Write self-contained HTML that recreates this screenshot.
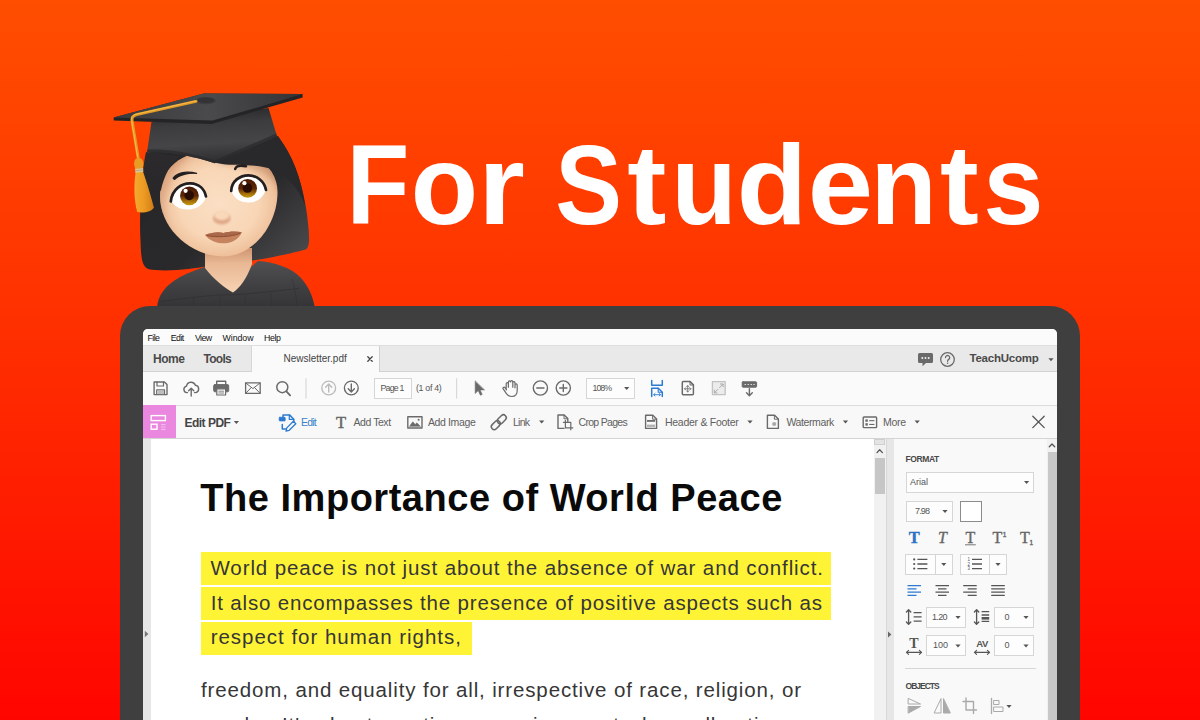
<!DOCTYPE html>
<html><head><meta charset="utf-8">
<style>
*{box-sizing:border-box;margin:0;padding:0}
html,body{width:1200px;height:720px;overflow:hidden}
body{position:relative;font-family:"Liberation Sans",sans-serif;background:linear-gradient(180deg,#ff4e00 0%,#ff2e00 48%,#ff0500 100%);}
.abs{position:absolute}
#title{left:346px;top:120px;font-size:113px;font-weight:bold;color:#fff;white-space:nowrap;line-height:130px;letter-spacing:0px}
#frame{left:120px;top:306px;width:960px;height:430px;background:#3f3f3f;border-radius:30px 30px 0 0}
#screen{left:143px;top:329px;width:914px;height:400px;background:#fff;border-radius:5px 5px 0 0;overflow:hidden}
#menubar{left:0;top:0;width:914px;height:16px;background:#fbfbfb;font-size:9px;color:#222}
#menubar span{position:absolute;top:3px}
#tabbar{left:0;top:16px;width:914px;height:26px;background:#e9e9e9;border-top:1px solid #dcdcdc;border-bottom:1px solid #d0d0d0}
#tab{left:108px;top:0;width:128px;height:25px;background:#fafafa;border-right:1px solid #cfcfcf}
#toolbar{left:0;top:42px;width:914px;height:34px;background:#fafafa;border-bottom:1px solid #dadada}
#editbar{left:0;top:76px;width:914px;height:33px;background:#f7f7f7;border-bottom:1px solid #d6d6d6}
#pink{left:0;top:0;width:32px;height:33px;background:#e58be0}
#doc{left:0;top:109px;width:914px;height:300px;background:#e6e6e6}
#page{left:8px;top:1px;width:722px;height:300px;background:#fff}
#panel{left:750px;top:0;width:154px;height:300px;background:#f5f5f5}
.t{position:absolute;white-space:nowrap}
#title span{display:inline-block}

.m{top:333.4px;font-size:8.8px;color:#101010}
.hb{top:351.8px;font-size:12px;font-weight:bold;color:#4a4a4a}
.tb{top:383.3px;font-size:8.8px;color:#555}
.eb{top:415.8px;font-size:10.5px;color:#606060}
.bx{background:#fdfdfd;border:1px solid #d6d6d6}
.hl{background:#fff336}
.p{font-size:20.5px;color:#363636;line-height:24px}
.pn{font-size:8.5px;font-weight:bold;color:#484848}
.ps{font-size:9px;color:#555}
</style></head><body>
<div id="title" class="abs"><span style="transform:translateX(-2.5px) scaleX(0.91)">F</span><span style="transform:translateX(-5px) scaleX(0.975)">o</span><span style="transform:translateX(-4.5px) scaleX(1.06)">r</span> <span style="transform:translateX(-8px) scaleX(0.886)">S</span><span style="transform:translateX(-7px) scaleX(1.04)">t</span><span style="transform:translateX(-2.5px) scaleX(0.944)">u</span><span style="transform:translateX(-4.5px) scaleX(1.02)">d</span><span style="transform:translateX(-2px) scaleX(1.04)">e</span><span style="transform:translateX(-4px) scaleX(0.96)">n</span><span style="transform:translateX(-1.5px) scaleX(1.03)">t</span><span style="transform:translateX(2px) scaleX(0.96)">s</span></div>
<!--EMOJI--><svg id="emoji" class="abs" style="left:100px;top:80px" width="240" height="240" viewBox="100 80 240 240">
<defs>
<linearGradient id="gHair" x1="0" y1="0" x2="1" y2="0.9"><stop offset="0" stop-color="#262527"/><stop offset="0.6" stop-color="#29282a"/><stop offset="0.82" stop-color="#3c3b3d"/><stop offset="1" stop-color="#4c4b4d"/></linearGradient>
<linearGradient id="gHairL" x1="0" y1="0" x2="0" y2="1"><stop offset="0" stop-color="#2c2a2c"/><stop offset="1" stop-color="#252426"/></linearGradient>
<radialGradient id="gFace" cx="0.5" cy="0.5" r="0.56"><stop offset="0" stop-color="#fbdfc4"/><stop offset="0.6" stop-color="#f8d6b6"/><stop offset="0.88" stop-color="#efc19b"/><stop offset="1" stop-color="#dba27a"/></radialGradient>
<linearGradient id="gNeck" x1="0" y1="0" x2="0" y2="1"><stop offset="0" stop-color="#cf9470"/><stop offset="0.35" stop-color="#e9b894"/><stop offset="1" stop-color="#f6d3b3"/></linearGradient>
<linearGradient id="gGown" x1="0" y1="0" x2="0" y2="1"><stop offset="0" stop-color="#505052"/><stop offset="0.5" stop-color="#414143"/><stop offset="1" stop-color="#343436"/></linearGradient>
<linearGradient id="gCap" x1="0" y1="0" x2="0.15" y2="1"><stop offset="0" stop-color="#232325"/><stop offset="0.35" stop-color="#3c3c3e"/><stop offset="0.7" stop-color="#454547"/><stop offset="1" stop-color="#303032"/></linearGradient>
<linearGradient id="gBoard" x1="0" y1="0.5" x2="1" y2="0.5"><stop offset="0" stop-color="#3a3a3c"/><stop offset="0.5" stop-color="#4a4a4c"/><stop offset="1" stop-color="#343436"/></linearGradient>
<linearGradient id="gTassel" x1="0" y1="0" x2="1" y2="0"><stop offset="0" stop-color="#f4aa30"/><stop offset="0.5" stop-color="#ec9a22"/><stop offset="1" stop-color="#d07e16"/></linearGradient>
<linearGradient id="gIris" x1="0" y1="0" x2="0" y2="1"><stop offset="0" stop-color="#4a1804"/><stop offset="0.5" stop-color="#5e2606"/><stop offset="0.8" stop-color="#a87408"/><stop offset="1" stop-color="#c89a10"/></linearGradient>
<filter id="b1" x="-20%" y="-20%" width="140%" height="140%"><feGaussianBlur stdDeviation="1.200"/></filter>
<filter id="b3" x="-30%" y="-30%" width="160%" height="160%"><feGaussianBlur stdDeviation="3"/></filter>
<clipPath id="cFace"><path d="M160 196 C160 170 180 150 218 150 C256 150 277.500 168 277.500 192 C277.500 226 252 256.500 224 256.500 C190 256.500 160 228 160 196 Z"/></clipPath>
</defs>
<!-- back hair -->
<path d="M150 150 C141 175 139 215 140.500 240 C141 258 142 266 148 269 C165 272.500 195 268.500 206 266.500 L256 260 C275 257 295 252.500 305.500 249.500 C309.500 248 309.500 240 308.500 228 C306 195 296 160 278 136 Z" fill="url(#gHair)"/>
<!-- gown -->
<path d="M157 308 C158 296 164 286 180 277 C190 272 198 269 205 267 L233 282 L258 261 C275 262 292 268 301 278 C309 287 313 297 315 308 Z" fill="url(#gGown)"/>
<path d="M161 301.500 C190 297.500 215 294.500 233 294.800 C255 293.500 280 290.500 299 288.500" stroke="#2c2c2e" stroke-width="0.800" fill="none" opacity="0.700"/>
<path d="M193.500 297.500 L194 308 M220 295.500 L220.300 308 M245 294.500 L245.500 308 M270.500 292.500 L271.500 308 M292 279 C295 288 296.500 298 297 308" stroke="#2e2e30" stroke-width="0.800" fill="none" opacity="0.600"/>
<!-- neck -->
<path d="M205 248 L205 268 C214 280 225 288 233 292.500 C240 288 247 278 252 264 L252 248 Z" fill="url(#gNeck)"/>
<!-- face -->
<path d="M160 196 C160 170 180 150 218 150 C256 150 277.500 168 277.500 192 C277.500 226 252 256.500 224 256.500 C190 256.500 160 228 160 196 Z" fill="url(#gFace)"/>
<g clip-path="url(#cFace)">
<path d="M150 150 L200 150 C180 160 168 180 164 205 C163 225 175 245 195 258 L150 260 Z" fill="#c98e6c" opacity="0.450" filter="url(#b3)"/>
<path d="M215 163 L280 137 L285 200 C278 180 262 168 240 166 Z" fill="#b98262" opacity="0.500" filter="url(#b3)"/>
</g>
<!-- front hair left -->
<path d="M146 152 C142 170 140 200 141.500 226 C148 208 156 198 161 190 C164 176 170 164 179 156 Z" fill="url(#gHairL)"/>
<!-- front hair right swoop -->
<path d="M214 162.500 L277 136 C293 155 301 178 305 205 C297 184 283 172 268 168 C250 163.500 235 166 222 164 Z" fill="#29282a"/>
<!-- eyebrows -->
<path d="M173.200 178.200 C176 173.500 185 170.200 196.600 173.400 C190 172.600 180 174.200 174.400 179.400 Z" fill="#231f20" stroke="#231f20" stroke-width="1.300" stroke-linejoin="round"/>
<path d="M235.200 169 C236 166 240 165 246 166.300" stroke="#231f20" stroke-width="2.600" fill="none" stroke-linecap="round"/>
<!-- eyes -->
<path d="M171.500 201 C173 190 182 184.500 190 184.500 C199 184.500 205 190 206 197 C204 204 197 209.500 188 209.500 C180 209.500 174 206 171.500 201 Z" fill="#fff"/>
<circle cx="189.400" cy="195.800" r="9.400" fill="url(#gIris)"/>
<circle cx="189.200" cy="195.400" r="4.800" fill="#2a0c02"/>
<circle cx="185.600" cy="190.800" r="2.100" fill="#fff"/>
<path d="M170.800 201.500 C172 189 182 183 190.500 183.300 C199 183.600 204.500 189 206 196.500" stroke="#231f20" stroke-width="2.700" fill="none" stroke-linecap="round"/>
<path d="M231.500 190.500 C232 181 240 176.500 248.500 176.500 C257 176.500 264 182 265.500 190 C264 197 257 202.500 248.500 202.500 C240 202.500 233 198 231.500 190.500 Z" fill="#fff"/>
<circle cx="247.600" cy="188.400" r="9.400" fill="url(#gIris)"/>
<circle cx="247.400" cy="188" r="4.800" fill="#2a0c02"/>
<circle cx="244.400" cy="183.200" r="2.100" fill="#fff"/>
<path d="M231.200 191 C231.500 181 240 175.300 248.500 175.300 C257 175.300 264.500 181.500 266 190" stroke="#231f20" stroke-width="2.700" fill="none" stroke-linecap="round"/>
<!-- nose -->
<ellipse cx="221.800" cy="218.400" rx="8.800" ry="6.200" fill="#e0a988" filter="url(#b1)"/>
<ellipse cx="221.800" cy="215.200" rx="7.600" ry="5" fill="#f9d8b9" filter="url(#b1)"/>
<!-- mouth -->
<path d="M205 235 C212 232.600 218 231.600 223.500 233 C229 231.300 236 231 242 232.200 C238.500 240 230.500 243.300 223.500 243.300 C215.500 243.300 209 240 205 235 Z" fill="#c5835f"/>
<path d="M205 235 C212 232.600 218 231.600 223.500 233 C229 231.300 236 231 242 232.200 C234 236.600 214 237.600 205 235 Z" fill="#a9684a"/>
<path d="M207 235.600 C215 237.600 232 237 240 233.400" stroke="#8a4630" stroke-width="0.900" fill="none" stroke-linecap="round"/>
<!-- cap skull -->
<path d="M151.500 122 L147 152.300 C160 152.300 168 152.500 177 154 C192 156.500 205 160 214.500 163.200 L277 136.300 L268.500 108 Z" fill="url(#gCap)"/>
<path d="M147.600 149.500 C160 149.300 168 149.700 177 151.200 C192 153.700 205 157.200 214.500 160.400 L276.200 133.600 L277 136.300 L214.500 163.200 C205 160 192 156.500 177 154 C168 152.500 160 152.300 147 152.300 Z" fill="#2a2a2c" opacity="0.700"/>
<!-- cap board -->
<path d="M113.600 117.600 L113.800 120.600 L211.500 124 L302.700 97.400 L302.500 94 L204 93.400 Z" fill="#242426"/>
<path d="M113.600 117.500 L203.400 93.400 L302.600 94.100 L212.500 120.600 Z" fill="url(#gBoard)"/>
<ellipse cx="205.800" cy="100.600" rx="10" ry="3.600" fill="#3e3e40"/>
<ellipse cx="205.800" cy="100.200" rx="8.600" ry="2.800" fill="#333335"/>
<!-- tassel cord -->
<path d="M196 101.400 L136.500 114.600 C132.800 115.600 131.600 117.600 132 120.600 L138.400 159" stroke="#e39a24" stroke-width="3" fill="none" stroke-linejoin="round" stroke-linecap="round"/>
<path d="M196 100.900 L136.300 114.100 C132.400 115.200 131.200 117.400 131.600 120.600 L137.600 157" stroke="#f6bf52" stroke-width="0.900" fill="none" stroke-linejoin="round" stroke-linecap="round"/>
<!-- tassel -->
<path d="M134.200 164.500 C133.800 160.500 135.500 158 138.500 158 C141.500 158 143.600 160.500 143.400 164.500 L142.800 168.500 L135.200 169.300 Z" fill="#e89c26"/>
<path d="M135.600 172 L142.800 171 C146 180 151 196 153.800 207.500 C152.400 211.500 143 213.500 137.200 212 C133.800 200 133.800 185 135.600 172 Z" fill="url(#gTassel)"/>
<path d="M135 169 L143 168 L143.400 171.800 L135.400 172.800 Z" fill="#d8c79a"/>
<path d="M135.200 170.800 L143.200 169.800" stroke="#a8925a" stroke-width="0.600"/>
</svg>
<!--/EMOJI-->
<div id="frame" class="abs"></div>
<div id="screen" class="abs"><div class="abs" id="W" style="left:-143px;top:-329px;width:1200px;height:720px">
<!-- bars -->
<div class="abs" style="left:143px;top:329px;width:914px;height:17px;background:#fbfbfb"></div>
<div class="abs" style="left:143px;top:345px;width:914px;height:27px;background:#e9e9e9;border-top:1px solid #dedede;border-bottom:1px solid #d2d2d2"></div>
<div class="abs" style="left:251px;top:346px;width:129px;height:26px;background:#fafafa;border-left:1px solid #d6d6d6;border-right:1px solid #cfcfcf"></div>
<div class="abs" style="left:143px;top:372px;width:914px;height:33px;background:#fafafa"></div>
<div class="abs" style="left:143px;top:405px;width:914px;height:34px;background:#f8f8f8;border-top:1px solid #dcdcdc;border-bottom:1px solid #d4d4d4"></div>
<div class="abs" style="left:143px;top:405px;width:32.500px;height:33px;background:#e988de"></div>
<!-- menu text -->
<div class="t m" style="left:147.500px;letter-spacing:-0.563px">File</div><div class="t m" style="left:170.75px;letter-spacing:-0.55px">Edit</div><div class="t m" style="left:195px;letter-spacing:-0.586px">View</div><div class="t m" style="left:222.500px;letter-spacing:-0.058px">Window</div><div class="t m" style="left:264px;letter-spacing:-0.416px">Help</div>
<div class="t hb" style="left:153px;letter-spacing:-0.452px">Home</div><div class="t hb" style="left:203.500px;letter-spacing:-0.718px">Tools</div>
<div class="t" style="left:283.500px;top:352.500px;font-size:10px;color:#444;letter-spacing:-0.010px">Newsletter.pdf</div>
<div class="t hb" style="left:969.500px;font-size:11.500px;top:352.3px;letter-spacing:-0.229px">TeachUcomp</div>
<!-- toolbar text & boxes -->
<div class="abs bx" style="left:374px;top:378px;width:38px;height:20.500px"></div>
<div class="t tb" style="left:380.500px;letter-spacing:-0.777px">Page 1</div><div class="t tb" style="left:416px;letter-spacing:-0.310px">(1 of 4)</div>
<div class="abs bx" style="left:585.500px;top:378px;width:49px;height:20.500px"></div>
<div class="t tb" style="left:592.500px;letter-spacing:-0.968px">108%</div>
<!-- editbar text -->
<div class="t" style="left:184.500px;top:415.500px;font-size:12px;font-weight:bold;color:#454545;letter-spacing:-0.515px">Edit PDF</div>
<div class="t eb" style="left:301px;color:#3b82c8;letter-spacing:-0.801px">Edit</div>
<div class="t eb" style="left:353.500px;letter-spacing:-0.439px">Add Text</div>
<div class="t eb" style="left:428px;letter-spacing:-0.381px">Add Image</div>
<div class="t eb" style="left:513px;letter-spacing:-0.754px">Link</div>
<div class="t eb" style="left:578.500px;letter-spacing:-0.689px">Crop Pages</div>
<div class="t eb" style="left:665px;letter-spacing:-0.277px">Header &amp; Footer</div>
<div class="t eb" style="left:786.500px;letter-spacing:-0.400px">Watermark</div>
<div class="t eb" style="left:883px;letter-spacing:-0.312px">More</div>
<!-- document area -->
<div class="abs" style="left:143px;top:439px;width:914px;height:290px;background:#e6e6e6"></div>
<div class="abs" style="left:151px;top:439px;width:722.5px;height:290px;background:#fff"></div>
<div class="abs" style="left:873.500px;top:439px;width:12px;height:290px;background:#f1f1f1"></div>
<div class="abs" style="left:874px;top:439px;width:11px;height:5.500px;background:#e4e4e4;border:1px solid #cfcfcf"></div>
<div class="abs" style="left:874.500px;top:458px;width:10px;height:36px;background:#c6c6c6"></div>
<div class="abs" style="left:885.500px;top:439px;width:8px;height:290px;background:#e6e6e6;border-left:1px solid #d8d8d8"></div>
<div class="abs" style="left:893.500px;top:439px;width:154px;height:290px;background:#f9f9f9"></div>
<div class="abs" style="left:1047px;top:439px;width:10px;height:290px;background:#f1f1f1"></div>
<div class="abs" style="left:1047.500px;top:452px;width:9.500px;height:280px;background:#c8c8c8"></div>
<!-- doc text -->
<div class="t" id="h1" style="left:200.3px;top:475.6px;font-size:38px;font-weight:bold;color:#0a0a0a;line-height:44px;letter-spacing:0.524px">The Importance of World Peace</div>
<div class="abs hl" style="left:201px;top:552px;width:629.500px;height:33px"></div>
<div class="abs hl" style="left:201px;top:587px;width:629.500px;height:33px"></div>
<div class="abs hl" style="left:201px;top:621.500px;width:270.500px;height:33px"></div>
<div class="t p" id="l1" style="left:210.5px;top:556px;letter-spacing:0.893px">World peace is not just about the absence of war and conflict.</div>
<div class="t p" id="l2" style="left:210.7px;top:590.7px;letter-spacing:0.838px">It also encompasses the presence of positive aspects such as</div>
<div class="t p" id="l3" style="left:210.7px;top:624.6px;letter-spacing:0.977px">respect for human rights,</div>
<div class="t p" id="l4" style="left:201px;top:678.3px;letter-spacing:0.865px">freedom, and equality for all, irrespective of race, religion, or</div>
<div class="t p" id="l5" style="left:201px;top:712.5px;letter-spacing:0.87px">gender. It's about creating an environment where all nations</div>
<!-- panel -->
<div class="t pn" style="left:905.500px;top:454px;letter-spacing:-0.388px">FORMAT</div>
<div class="t pn" style="left:905.500px;top:680.500px;letter-spacing:-0.984px">OBJECTS</div>
<div class="abs bx" style="left:905.500px;top:471.500px;width:128.500px;height:21px"></div>
<div class="t ps" style="left:910px;top:476.500px">Arial</div>
<div class="abs bx" style="left:905.500px;top:500.500px;width:47px;height:21px"></div>
<div class="t ps" style="left:915px;top:505.500px;letter-spacing:-0.843px">7.98</div>
<div class="abs" style="left:960px;top:500.500px;width:21.500px;height:21px;background:#fff;border:1.5px solid #8c8c8c"></div>
<div class="abs bx" style="left:905px;top:553.500px;width:48px;height:21px"></div><div class="abs" style="left:935px;top:554px;width:1px;height:20px;background:#d4d4d4"></div>
<div class="abs bx" style="left:960px;top:553.500px;width:47px;height:21px"></div><div class="abs" style="left:989px;top:554px;width:1px;height:20px;background:#d4d4d4"></div>
<div class="abs bx" style="left:926px;top:606.500px;width:39.500px;height:21px"></div><div class="t ps" style="left:932px;top:611.500px;letter-spacing:-0.673px">1.20</div>
<div class="abs bx" style="left:994px;top:606.500px;width:39.500px;height:21px"></div><div class="t ps" style="left:1004.500px;top:611.500px">0</div>
<div class="abs bx" style="left:926px;top:635px;width:39.500px;height:21px"></div><div class="t ps" style="left:933px;top:640px">100</div>
<div class="abs bx" style="left:994px;top:635px;width:39.500px;height:21px"></div><div class="t ps" style="left:1004.500px;top:640px">0</div>
<div class="abs" style="left:905px;top:667.500px;width:131px;height:1px;background:#d6d6d6"></div>
<!--ICONS-S--><svg class="abs" style="left:0;top:0" width="1200" height="720" viewBox="0 0 1200 720" fill="none" stroke="#6a6a6a" stroke-width="1.400" stroke-linecap="round" stroke-linejoin="round">
<defs><path id="dd" d="M-2.600 -1.300 L2.600 -1.300 L0 1.700 Z" fill="#555" stroke="none"/></defs>
<!-- tab bar -->
<path d="M367.800 356.800 L372.200 361.200 M372.200 356.800 L367.800 361.200" stroke="#444" stroke-width="1.300"/>
<path d="M919.500 353 h12 a1.500 1.500 0 0 1 1.500 1.500 v7 a1.500 1.500 0 0 1 -1.500 1.500 h-5.500 l-3.500 3.200 v-3.200 h-3 a1.500 1.500 0 0 1 -1.500 -1.500 v-7 a1.500 1.500 0 0 1 1.500 -1.500 Z" fill="#6a6a6a" stroke="none"/>
<g fill="#efefef" stroke="none"><circle cx="922.300" cy="358" r="1"/><circle cx="925.500" cy="358" r="1"/><circle cx="928.700" cy="358" r="1"/></g>
<circle cx="947.500" cy="359.500" r="6.800" stroke-width="1.300"/>
<path d="M945.500 357.600 a2.100 2.100 0 1 1 3.200 1.800 c-0.900 0.600 -1.100 1 -1.100 1.900" stroke-width="1.300"/><circle cx="947.600" cy="363.300" r="0.800" fill="#6a6a6a" stroke="none"/>
<use href="#dd" x="1051" y="359.500"/>
<!-- toolbar -->
<path d="M154.100 382 h10.300 l2.600 2.600 v10 h-12.900 Z"/><path d="M157 382.200 v3.800 h6.500 v-3.800 M156.700 394.400 v-4.600 h7.800 v4.600" stroke-width="1.200"/><rect x="157.300" y="390.300" width="6.600" height="3.800" fill="#bdbdbd" stroke="none"/>
<path d="M187.500 392.600 h-0.700 a3.300 3.300 0 0 1 -0.300 -6.500 a4.600 4.600 0 0 1 8.900 -0.800 a3.700 3.700 0 0 1 0.300 7.300 h-1.200"/><path d="M191.200 396 v-7.600 M188.600 390.800 l2.600 -2.600 l2.600 2.600"/>
<path d="M216.700 384.500 v-3.200 h9 v3.200" /><rect x="213.700" y="384.600" width="15" height="7.200" rx="1.200" fill="#6a6a6a" stroke="#6a6a6a" stroke-width="1"/><rect x="216.800" y="388.800" width="8.800" height="6.200" fill="#fafafa" stroke-width="1.200"/><path d="M218.800 391.200 h4.800 M218.800 393 h4.800" stroke-width="0.800"/>
<rect x="245.600" y="382.800" width="14.600" height="10.600" stroke-width="1.300"/><path d="M245.800 383 l7.100 5.600 l7.100 -5.600 M245.800 393.200 l5.400 -5.600 M260 393.200 l-5.400 -5.600" stroke-width="1"/>
<circle cx="282.300" cy="387.200" r="5.500" stroke-width="1.500"/><path d="M286.400 391.400 l3.700 3.900" stroke-width="1.800"/>
<path d="M306 378.700 v19.500 M456.700 378.700 v19.500" stroke="#d2d2d2" stroke-width="1"/>
<circle cx="328.700" cy="388" r="6.900" stroke="#bcbcbc"/><path d="M328.700 392 v-7.600 M325.600 387.200 l3.100 -3.100 l3.100 3.100" stroke="#bcbcbc"/>
<circle cx="351.300" cy="388" r="6.900"/><path d="M351.300 384 v7.600 M348.200 388.800 l3.100 3.100 l3.100 -3.100"/>
<path d="M475.200 381.200 v12.200 l3 -2.800 l2.200 4.600 l1.800 -0.800 l-2.100 -4.500 h4.100 Z" fill="#6a6a6a" stroke-width="0.600"/>
<path d="M506.200 390 v-6.300 a1.100 1.100 0 0 1 2.200 0 v-1.700 a1.100 1.100 0 0 1 2.200 0 v-0.300 M508.400 383 v4.200 M510.600 381.800 a1.100 1.100 0 0 1 2.200 0 v5.400 M512.800 382.800 a1.100 1.100 0 0 1 2.200 0 v5 M515 385 a1.100 1.100 0 0 1 2.200 0 v5.500 c0 3.500 -2 6 -5.400 6 c-3 0 -4.200 -1.200 -5.600 -3.200 l-3 -4.400 c-0.800 -1.300 0.800 -2.300 1.800 -1.300 l1.400 1.800" stroke-width="1.200"/>
<circle cx="540.400" cy="388" r="7.100"/><path d="M536.800 388 h7.200"/>
<circle cx="563.300" cy="388" r="7.100"/><path d="M559.700 388 h7.200 M563.300 384.400 v7.200"/>
<use href="#dd" x="626.700" y="388.300"/>
<g stroke="#2d7bd0" stroke-width="1.500"><path d="M651.700 380.500 v4.800 h10.600 v-4.800"/><path d="M651.700 396.600 v-8.400 h6.600 l4 4 v4.400"/><path d="M658.200 388.400 v3.800 h3.800" stroke-width="1.100"/><path d="M653.800 394.700 h6.600 M655 393.500 l-1.300 1.200 l1.300 1.200 M659.200 393.500 l1.300 1.200 l-1.300 1.200" stroke-width="0.900"/></g>
<path d="M683.300 381.600 h6.800 l3.300 3.300 v8.800 a1 1 0 0 1 -1 1 h-9.100 a1 1 0 0 1 -1 -1 v-11.100 a1 1 0 0 1 1 -1 Z" stroke-width="1.500"/><path d="M690 381.800 v3.200 h3.200" stroke-width="1"/><path d="M687.700 385.600 v6.400 M684.500 388.800 h6.400 M686.600 386.700 l1.100 -1.100 l1.100 1.100 M686.600 390.900 l1.100 1.100 l1.100 -1.100 M685.600 387.700 l-1.100 1.100 l1.100 1.100 M689.800 387.700 l1.100 1.100 l-1.100 1.100" stroke-width="0.800"/>
<g stroke="#c2c2c2"><rect x="712.400" y="381.600" width="12.800" height="13" fill="#ececec" stroke-width="1.300"/><path d="M719.600 387.600 l3.400 -3.400 M720.400 384 h2.700 v2.700 M717.800 389.400 l-3.400 3.400 M714.300 390.200 v2.700 h2.700" stroke="#aaa" stroke-width="1"/></g>
<rect x="742.200" y="381.800" width="14.400" height="5.400" rx="0.800" fill="#6a6a6a" stroke-width="1"/><path d="M744.600 384.500 h1.200 M747.600 384.500 h1.200 M750.600 384.500 h1.200 M753.400 384.500 h1.200" stroke="#f4f4f4" stroke-width="1.100" stroke-linecap="butt"/><path d="M749.400 388.600 v7 M746.500 392.800 l2.900 2.900 l2.900 -2.900"/>
<!-- edit bar -->
<g stroke="#fff" stroke-width="1.400" stroke-linejoin="miter"><rect x="151.200" y="415.600" width="14.200" height="5"/><rect x="151.200" y="424.200" width="5.800" height="5"/><path d="M161 424.600 h4.600 M161 427 h4.600 M161 429.400 h4.600" stroke="#f6c4f1" stroke-width="0.900" stroke-linecap="butt"/></g>
<use href="#dd" x="236.400" y="422.200"/>
<g stroke="#2d7bd0" stroke-width="1.500"><path d="M283 417.500 v-2.600 h6.500 l4.300 4.300 v2.300"/><path d="M289.300 415 v4.400 h4.400" stroke-width="1.200"/><rect x="279.200" y="417.300" width="6" height="3.600" rx="0.600" fill="#2d7bd0" stroke-width="0.800"/><path d="M282.300 424.500 v4.500 h3.200"/><path d="M286.800 427.900 l6.600 -6.600 l2.400 2.400 l-6.600 6.600 l-3.200 0.800 Z" stroke-width="1.300"/></g>
<text x="341" y="427.500" font-family="Liberation Serif" font-size="16.500" fill="#666" stroke="#666" stroke-width="0.45" text-anchor="middle">T</text>
<rect x="407.800" y="416.800" width="14.200" height="11.200" stroke-width="1.400"/><path d="M409.600 426.200 l3.200 -4.400 l2.400 2.600 l1.800 -1.600 l3.200 3.400 Z" fill="#6a6a6a" stroke-width="0.500"/><circle cx="418.600" cy="419.800" r="1" fill="#6a6a6a" stroke="none"/>
<g stroke-width="1.500"><rect x="490.700" y="422.200" width="10.200" height="5.800" rx="2.900" transform="rotate(-45 495.800 425.100)"/><rect x="496.700" y="416.400" width="10.200" height="5.800" rx="2.900" transform="rotate(-45 501.800 419.300)"/></g>
<use href="#dd" x="541.700" y="421.700"/>
<path d="M564 428.400 h-6 v-13.400 h6.200 l3.600 3.600 v3"/><path d="M564 415.200 v3.600 h3.600" stroke-width="1"/><path d="M565.400 420.400 v7.400 h7.400 M563.400 422.400 h7.400 v7.400" stroke-width="1.200"/>
<path d="M645.600 415.200 h7.200 l3.800 3.800 v9.400 h-11 Z"/><path d="M652.600 415.400 v3.800 h3.800" stroke-width="1"/><rect x="647" y="420" width="8.200" height="1.800" fill="#6a6a6a" stroke="none"/><rect x="647" y="424.600" width="8.200" height="2.400" fill="#b4b4b4" stroke="none"/>
<use href="#dd" x="750" y="421.700"/>
<path d="M767.400 415.200 h7.200 l3.800 3.800 v9.400 h-11 Z"/><path d="M774.400 415.400 v3.800 h3.800" stroke-width="1"/><circle cx="774.200" cy="424" r="2.100" fill="#a8a8a8" stroke="none"/>
<use href="#dd" x="845.500" y="421.700"/>
<rect x="863.200" y="417" width="13.400" height="10.600" rx="0.800" stroke-width="1.400"/><g fill="#6a6a6a" stroke="none"><rect x="865.400" y="419.400" width="2.400" height="2.400"/><rect x="865.400" y="423.200" width="2.400" height="2.400"/><rect x="869.200" y="420.100" width="5.200" height="1.100"/><rect x="869.200" y="423.900" width="5.200" height="1.100"/></g>
<use href="#dd" x="917.200" y="421.700"/>
<path d="M1032.800 416.200 l11.400 11.400 M1044.200 416.200 l-11.400 11.400" stroke="#555" stroke-width="1.300"/>
<!-- doc -->
<path d="M144.800 630.800 l3.600 3.200 l-3.600 3.200 Z" fill="#777" stroke="none"/>
<path d="M888 631.600 l3.400 3 l-3.400 3 Z" fill="#666" stroke="none"/>
<path d="M877 452.600 l2.700 -2.800 l2.700 2.800" stroke="#555" stroke-width="1.300"/>
<path d="M1049.300 446.800 l2.700 -2.800 l2.700 2.800" stroke="#555" stroke-width="1.300"/>
<!-- panel -->
<use href="#dd" x="1026.600" y="482.200"/><use href="#dd" x="945" y="511.200"/>
<use href="#dd" x="943.800" y="564.200"/><use href="#dd" x="998" y="564.200"/>
<use href="#dd" x="958" y="617.200"/><use href="#dd" x="1026" y="617.200"/><use href="#dd" x="958" y="645.700"/><use href="#dd" x="1026" y="645.700"/>
<g font-family="Liberation Serif" font-size="16" stroke="#666" stroke-width="0.35" fill="#666" text-anchor="middle">
<text x="914.200" y="542.600" fill="#2a72c4" stroke="#2a72c4" font-weight="bold" font-size="16.500">T</text>
<text x="942.500" y="542.600" font-style="italic">T</text>
<text x="970.300" y="542.600">T</text>
<text x="997.500" y="542.600">T</text><text x="1004.600" y="537.200" font-family="Liberation Sans" font-size="6.500">1</text>
<text x="1025" y="542.600">T</text><text x="1031.400" y="544.800" font-family="Liberation Sans" font-size="6.500">1</text>
</g>
<path d="M965 544.800 h10.800" stroke="#777" stroke-width="1" stroke-linecap="butt"/>
<g stroke="#555" stroke-width="1.300" stroke-linecap="butt"><path d="M917.400 559.400 h10 M917.400 564 h10 M917.400 568.600 h10"/><path d="M972 559.400 h10 M972 564 h10 M972 568.600 h10"/></g>
<g fill="#555" stroke="none"><circle cx="914.200" cy="559.400" r="1.100"/><circle cx="914.200" cy="564" r="1.100"/><circle cx="914.200" cy="568.600" r="1.100"/></g>
<g font-family="Liberation Sans" font-size="4.500" fill="#555" stroke="none"><text x="967.400" y="561">1</text><text x="967.400" y="565.600">2</text><text x="967.400" y="570.200">3</text></g>
<g stroke-width="1.300" stroke-linecap="butt" stroke="#555">
<path d="M907.500 585.700 h13.500 M907.500 588.900 h9 M907.500 592.100 h13.500 M907.500 595.300 h9" stroke="#2d7bd0"/>
<path d="M935.500 585.700 h13.500 M938 588.900 h8.500 M935.500 592.100 h13.500 M938 595.300 h8.500"/>
<path d="M963.200 585.700 h13.500 M967.700 588.900 h9 M963.200 592.100 h13.500 M967.700 595.300 h9"/>
<path d="M991.200 585.700 h13.600 M991.200 588.900 h13.600 M991.200 592.100 h13.600 M991.200 595.300 h13.600"/>
</g>
<g stroke="#555" stroke-width="1.300">
<path d="M908.600 610 v14 M906.400 612 l2.200 -2.400 l2.200 2.400 M906.400 622 l2.200 2.400 l2.200 -2.400"/><path d="M913.600 612.600 h8 M913.600 616.900 h8 M913.600 621.200 h8" stroke-linecap="butt"/>
<path d="M976.600 610 v14 M974.400 612 l2.200 -2.400 l2.200 2.400 M974.400 622 l2.200 2.400 l2.200 -2.400"/><path d="M981.600 611.600 h7.600 M981.600 615 h7.600 M981.600 621.400 h7.600" stroke-linecap="butt"/><rect x="981.600" y="617" width="7.600" height="2.600" fill="#555" stroke="none"/>
<path d="M906.600 652.400 h14.800 M908.600 650.400 l-2.200 2 l2.200 2 M919.400 650.400 l2.200 2 l-2.200 2" stroke-width="1.100"/>
<path d="M974.600 652.400 h14.800 M976.600 650.400 l-2.200 2 l2.200 2 M987.400 650.400 l2.200 2 l-2.200 2" stroke-width="1.100"/>
</g>
<text x="914" y="648.400" font-family="Liberation Serif" font-weight="bold" font-size="14" fill="#555" stroke="none" text-anchor="middle">T</text>
<text x="982" y="647.400" font-family="Liberation Sans" font-weight="bold" font-size="9.500" fill="#555" stroke="none" text-anchor="middle" letter-spacing="-0.5">AV</text>
<g stroke="#aaa" fill="#aaa" stroke-width="1">
<path d="M908.500 698.500 l12 5.500 h-12 Z" fill="none"/><path d="M908.500 706.500 h12 l-12 6.500 Z"/>
<path d="M941 699 v14 h-6.500 Z" fill="none"/><path d="M943.500 699 v14 h6.500 Z"/>
<path d="M966 698 v12 h10.500 M963 701.500 h10.500 v12" fill="none" stroke-width="1.400"/>
<path d="M991.500 698.500 v15" fill="none" stroke-width="1.300"/><rect x="994" y="700.500" width="5" height="4" fill="none"/><rect x="994" y="707" width="9" height="4.500" fill="none"/>
</g>
<use href="#dd" x="1009" y="706.400"/>
</svg>
<!--ICONS-E-->
</div></div>

</body></html>
